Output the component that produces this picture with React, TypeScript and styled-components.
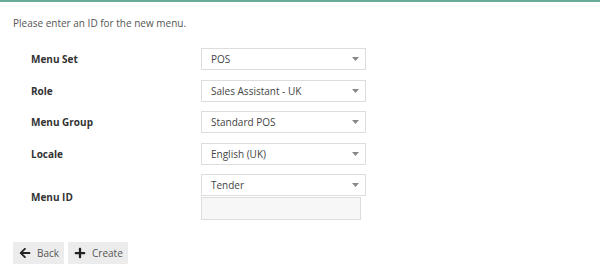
import styled, { createGlobalStyle } from 'styled-components';
import { FaArrowLeft, FaPlus } from 'react-icons/fa';

const GlobalStyle = createGlobalStyle`
  html, body {
    margin: 0;
    padding: 0;
    background: #fff;
  }
  body {
    font-family: "Open Sans", "DejaVu Sans", sans-serif;
    font-size: 10px;
    color: #444;
  }
`;

interface FieldRow {
  label: string;
  value: string;
}

const rows: FieldRow[] = [
  { label: 'Menu Set', value: 'POS' },
  { label: 'Role', value: 'Sales Assistant - UK' },
  { label: 'Menu Group', value: 'Standard POS' },
  { label: 'Locale', value: 'English (UK)' },
];

const Caret = () => (
  <svg width="7" height="4" viewBox="0 0 7 4">
    <path d="M0 0 L7 0 L3.5 4 Z" fill="#888" />
  </svg>
);

const Dropdown = ({ value }: { value: string }) => (
  <Select>
    <span>{value}</span>
    <Caret />
  </Select>
);

const App = () => {
  return (
    <Page>
      <GlobalStyle />
      <Intro>Please enter an ID for the new menu.</Intro>
      <Form>
        {rows.map((row) => (
          <Row key={row.label}>
            <Label>{row.label}</Label>
            <Dropdown value={row.value} />
          </Row>
        ))}
        <Row>
          <Label>Menu ID</Label>
          <Stack>
            <Dropdown value="Tender" />
            <TextInput />
          </Stack>
        </Row>
      </Form>
      <Actions>
        <Button>
          <FaArrowLeft size={12} />
          Back
        </Button>
        <Button>
          <FaPlus size={12} />
          Create
        </Button>
      </Actions>
    </Page>
  );
};

export default App;

const Page = styled.div`
  border-top: 2px solid #67ab99;
  padding: 14px 13px 0;
`;

const Intro = styled.p`
  margin: 0;
  line-height: 14px;
  color: #555;
`;

const Form = styled.div`
  display: flex;
  flex-direction: column;
  gap: 9.5px;
  margin-top: 18px;
  padding-left: 18px;
`;

const Row = styled.div`
  display: grid;
  grid-template-columns: 170px 1fr;
  align-items: center;
`;

const Label = styled.div`
  font-weight: 700;
  color: #333;
`;

const Stack = styled.div`
  display: flex;
  flex-direction: column;
  gap: 1px;
`;

const Select = styled.div`
  box-sizing: border-box;
  width: 165px;
  height: 22px;
  border: 1px solid #ddd;
  background: #fff;
  display: flex;
  align-items: center;
  justify-content: space-between;
  padding: 0 6px 0 9px;
  color: #444;
`;

const TextInput = styled.div`
  box-sizing: border-box;
  width: 160px;
  height: 23px;
  border: 1px solid #ddd;
  background: #f7f7f7;
`;

const Actions = styled.div`
  display: flex;
  gap: 4px;
  margin-top: 22px;
`;

const Button = styled.button`
  display: flex;
  align-items: center;
  gap: 6px;
  height: 22px;
  padding: 0 5px 0 6px;
  border: none;
  background: #ececec;
  font-family: inherit;
  font-size: 10px;
  color: #555;
  cursor: pointer;
  svg {
    color: #222;
  }
`;
